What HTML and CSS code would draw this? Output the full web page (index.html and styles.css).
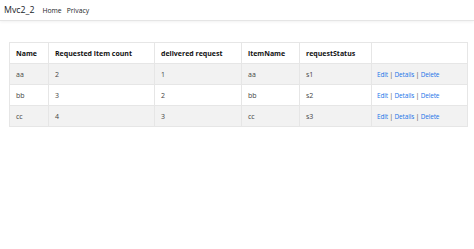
FILE: index.html
```html
<!DOCTYPE html>
<html>
<head>
	<title>Index - Mvc2_2</title>
	<link rel="stylesheet" href="styles.css">
</head>
<body>
	<header class="navbar">
		<a class="brand" href="#">Mvc2_2</a>
		<ul class="nav">
			<li><a href="#">Home</a></li>
			<li><a href="#">Privacy</a></li>
		</ul>
	</header>
	<main class="container">
		<table class="table">
			<colgroup>
				<col class="c-name">
				<col class="c-count">
				<col class="c-delivered">
				<col class="c-item">
				<col class="c-status">
				<col>
			</colgroup>
			<thead>
				<tr>
					<th>Name</th>
					<th>Requested item count</th>
					<th>delivered request</th>
					<th>itemName</th>
					<th>requestStatus</th>
					<th></th>
				</tr>
			</thead>
			<tbody>
				<tr>
					<td>aa</td>
					<td>2</td>
					<td>1</td>
					<td>aa</td>
					<td>s1</td>
					<td class="actions"><a href="#">Edit</a> | <a href="#">Details</a> | <a href="#">Delete</a></td>
				</tr>
				<tr>
					<td>bb</td>
					<td>3</td>
					<td>2</td>
					<td>bb</td>
					<td>s2</td>
					<td class="actions"><a href="#">Edit</a> | <a href="#">Details</a> | <a href="#">Delete</a></td>
				</tr>
				<tr>
					<td>cc</td>
					<td>4</td>
					<td>3</td>
					<td>cc</td>
					<td>s3</td>
					<td class="actions"><a href="#">Edit</a> | <a href="#">Details</a> | <a href="#">Delete</a></td>
				</tr>
			</tbody>
		</table>
	</main>
</body>
</html>
```

FILE: styles.css
```css
body {
	background-color: #fff;
	color: #212529;
	font-family: "Open Sans", "Noto Sans", sans-serif;
	font-size: 7px;
	margin: 0;
	padding: 0;
}
a {
	color: #1a73e8;
	text-decoration: none;
}
.navbar {
	align-items: center;
	border-bottom: 1px solid #e5e5e5;
	box-shadow: 0 1px 3px rgba(0, 0, 0, 0.06);
	display: flex;
	height: 20px;
	padding: 0 4px;
}
.brand {
	color: #212529;
	font-size: 8.8px;
	margin-right: 8px;
}
.nav {
	display: flex;
	gap: 5px;
	list-style: none;
	margin: 0;
	padding: 0;
}
.nav a {
	color: #212529;
	font-size: 6.8px;
}
.container {
	padding: 21px 6px 0 9px;
}
.table {
	border-collapse: collapse;
	table-layout: fixed;
	width: 459px;
}
.c-name { width: 39px; }
.c-count { width: 106px; }
.c-delivered { width: 87px; }
.c-item { width: 58px; }
.c-status { width: 72px; }
.table th,
.table td {
	border: 1px solid #e6e6e6;
	height: 20px;
	padding: 0 6px;
	text-align: left;
	vertical-align: middle;
	white-space: nowrap;
}
.table th {
	font-weight: 700;
	color: #111;
}
.table td {
	color: #444;
}
.table td.actions {
	font-size: 6.4px;
	padding-left: 5px;
	letter-spacing: -0.1px;
}
.table tbody tr:nth-child(odd) {
	background-color: #f2f2f2;
}
```
